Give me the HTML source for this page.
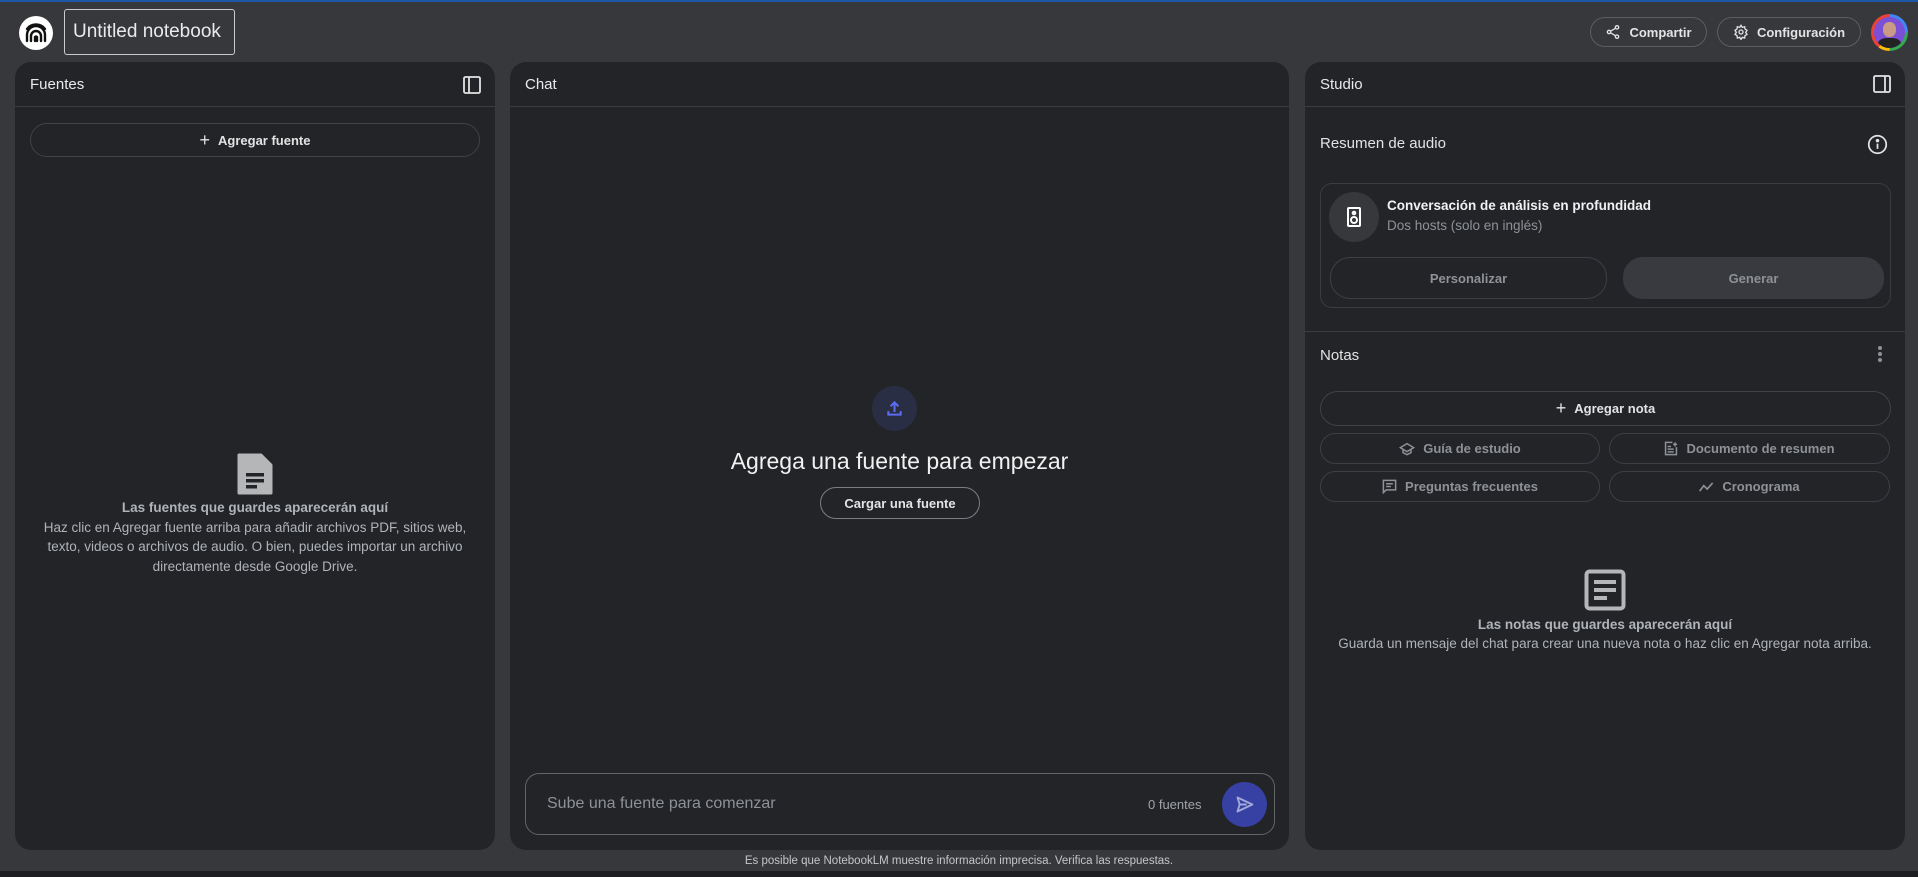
<!DOCTYPE html>
<html><head><meta charset="utf-8"><style>
*{box-sizing:border-box;margin:0;padding:0}
body{width:1918px;height:877px;background:#37383c;font-family:"Liberation Sans",sans-serif;color:#e3e3e3;position:relative;overflow:hidden}
.a{position:absolute}
.panel{position:absolute;background:#222428;border-radius:16px;top:62px;height:788px}
.hdr{position:absolute;left:0;right:0;top:0;height:45px;border-bottom:1px solid #3a3c41}
.title{position:absolute;top:14px;font-size:15px;color:#e8eaed}
.btn{position:absolute;border:1px solid #45484d;border-radius:20px;display:flex;align-items:center;justify-content:center;font-size:13px;font-weight:bold;color:#e3e3e3;gap:8px}
.dim{color:#8e9196;border-color:#3c3f44}
.c{text-align:center}
</style></head><body>
<div class="a" style="left:0;top:0;width:1918px;height:2px;background:#1e56a8"></div>
<div class="a" style="left:19px;top:16px;width:34px;height:34px;border-radius:50%;background:#fff"></div>
<svg class="a" style="left:19px;top:16px" width="34" height="34" viewBox="0 0 34 34"><g fill="none" stroke="#111" stroke-width="2.4" stroke-linecap="round"><path d="M8 25V19a9 9 0 0 1 18 0v6"/><path d="M12 25v-5a5 5 0 0 1 10 0v5"/><path d="M8 13a10 8 0 0 1 18 0"/><path d="M16 25v-4a1.5 1.5 0 0 1 2 0v4"/></g></svg>
<div class="a" style="left:64px;top:9px;width:171px;height:46px;border:1px solid #c9cacc;border-radius:3px;font-size:19px;line-height:44px;padding-left:8px;color:#e8eaed">Untitled notebook</div>
<div class="btn" style="left:1590px;top:17px;width:117px;height:30px;font-size:13px;border-color:#5a5d62">
<svg width="16" height="16" viewBox="0 0 24 24" fill="none" stroke="#e3e3e3" stroke-width="2"><circle cx="18" cy="5" r="2.5"/><circle cx="6" cy="12" r="2.5"/><circle cx="18" cy="19" r="2.5"/><path d="M8.2 10.8l7.6-4.4M8.2 13.2l7.6 4.4"/></svg>Compartir</div>
<div class="btn" style="left:1717px;top:17px;width:144px;height:30px;border-color:#5a5d62">
<svg width="16" height="16" viewBox="0 0 24 24" fill="none" stroke="#e3e3e3" stroke-width="2"><circle cx="12" cy="12" r="3"/><path d="M12 2l2 3 3.5-1 .5 3.5 3 2-2 3 2 3-3 2-.5 3.5-3.5-1-2 3-2-3-3.5 1-.5-3.5-3-2 2-3-2-3 3-2 .5-3.5 3.5 1z"/></svg>Configuración</div>
<div class="a" style="left:1871px;top:14px;width:37px;height:37px;border-radius:50%;background:conic-gradient(#4285f4 0 25%,#34a853 25% 50%,#fbbc05 50% 60%,#ea4335 60% 100%)"></div>
<div class="a" style="left:1874px;top:17px;width:31px;height:31px;border-radius:50%;background:#7b4fd6;overflow:hidden"><div class="a" style="left:9px;top:5px;width:13px;height:15px;border-radius:45%;background:#c99a84"></div><div class="a" style="left:4px;top:21px;width:23px;height:14px;border-radius:40%;background:#222"></div></div>

<div class="panel" style="left:15px;width:480px">
<div class="hdr"><div class="title" style="left:15px">Fuentes</div>
<svg class="a" style="left:448px;top:14px" width="18" height="18" viewBox="0 0 18 18" fill="none" stroke="#e3e3e3" stroke-width="1.8"><rect x="1" y="1" width="16" height="16" rx="1.5"/><path d="M6 1v16"/></svg></div>
<div class="btn" style="left:15px;top:61px;width:450px;height:34px;border-color:#3f4247"><span style="font-size:18px;font-weight:normal">+</span>Agregar fuente</div>
<svg class="a" style="left:221px;top:390px" width="38" height="44" viewBox="0 0 38 44"><path d="M3 3h22l10 10v28H3z" fill="#b5b6b8" stroke="#b5b6b8" stroke-width="3" stroke-linejoin="round"/><rect x="10" y="21" width="18" height="3.5" fill="#222428"/><rect x="10" y="27" width="18" height="3.5" fill="#222428"/><rect x="10" y="33" width="11" height="3.5" fill="#222428"/></svg>
<div class="a c" style="left:0;width:480px;top:436px;font-size:13.5px;line-height:19.5px;color:#b0b3b8"><b>Las fuentes que guardes aparecerán aquí</b><br>Haz clic en Agregar fuente arriba para añadir archivos PDF, sitios web,<br>texto, videos o archivos de audio. O bien, puedes importar un archivo<br>directamente desde Google Drive.</div>
</div>

<div class="panel" style="left:510px;width:779px">
<div class="hdr"><div class="title" style="left:15px">Chat</div></div>
<div class="a" style="left:362px;top:324px;width:45px;height:45px;border-radius:50%;background:#2a2e44"></div>
<svg class="a" style="left:374px;top:336px" width="21" height="21" viewBox="0 0 24 24" fill="none" stroke="#5b6cf0" stroke-width="2.4"><path d="M12 16V5M7.5 9.5L12 5l4.5 4.5M5 15v4h14v-4"/></svg>
<div class="a c" style="left:0;width:779px;top:386px;font-size:23px;color:#f1f1f1">Agrega una fuente para empezar</div>
<div class="btn" style="left:310px;top:425px;width:160px;height:32px;border-color:#7a7d82">Cargar una fuente</div>
<div class="a" style="left:15px;top:711px;width:750px;height:62px;border:1px solid #62656a;border-radius:14px"></div>
<div class="a" style="left:37px;top:733px;font-size:16px;color:#8e9196">Sube una fuente para comenzar</div>
<div class="a" style="left:638px;top:735px;font-size:13px;color:#a0a3a8">0 fuentes</div>
<div class="a" style="left:712px;top:720px;width:45px;height:45px;border-radius:50%;background:#3641a3"></div>
<svg class="a" style="left:724px;top:732px" width="21" height="21" viewBox="0 0 24 24" fill="none" stroke="#a3a9d8" stroke-width="2.2" stroke-linejoin="round"><path d="M4 4l17 8-17 8 2.5-8z M6.5 12h8"/></svg>
</div>

<div class="panel" style="left:1305px;width:600px">
<div class="hdr"><div class="title" style="left:15px">Studio</div>
<svg class="a" style="left:568px;top:13px" width="18" height="18" viewBox="0 0 18 18" fill="none" stroke="#e3e3e3" stroke-width="1.8"><rect x="1" y="1" width="16" height="16" rx="1.5"/><path d="M12 1v16"/></svg></div>
<div class="a" style="left:15px;top:73px;font-size:15px">Resumen de audio</div>
<svg class="a" style="left:562px;top:72px" width="21" height="21" viewBox="0 0 24 24" fill="none" stroke="#e3e3e3" stroke-width="2"><circle cx="12" cy="12" r="10"/><path d="M12 11v6"/><circle cx="12" cy="7.5" r="1" fill="#e3e3e3"/></svg>
<div class="a" style="left:15px;top:121px;width:571px;height:125px;border:1px solid #3a3c41;border-radius:12px"></div>
<div class="a" style="left:24px;top:130px;width:50px;height:50px;border-radius:50%;background:#36383c"></div>
<svg class="a" style="left:41px;top:144px" width="16" height="22" viewBox="0 0 16 22" fill="none" stroke="#fff" stroke-width="2"><rect x="2" y="2" width="12" height="18" rx="1"/><circle cx="8" cy="7" r="1.3"/><circle cx="8" cy="14" r="3"/></svg>
<div class="a" style="left:82px;top:136px;font-size:13.5px;font-weight:bold;color:#f1f1f1">Conversación de análisis en profundidad</div>
<div class="a" style="left:82px;top:156px;font-size:13.5px;color:#8e9196">Dos hosts (solo en inglés)</div>
<div class="btn dim" style="left:25px;top:195px;width:277px;height:42px">Personalizar</div>
<div class="btn" style="left:318px;top:195px;width:261px;height:42px;background:#383a3f;border-color:#383a3f;color:#8e9196">Generar</div>
<div class="a" style="left:0;right:0;top:269px;height:1px;background:#3a3c41"></div>
<div class="a" style="left:15px;top:285px;font-size:15px">Notas</div>
<div class="a" style="left:573px;top:284px;width:4px;height:4px;border-radius:50%;background:#8e9196;box-shadow:0 6px 0 #8e9196,0 12px 0 #8e9196"></div>
<div class="btn" style="left:15px;top:329px;width:571px;height:35px;border-color:#3f4247"><span style="font-size:18px;font-weight:normal">+</span>Agregar nota</div>
<div class="btn dim" style="left:15px;top:371px;width:280px;height:31px">
<svg width="16" height="14" viewBox="0 0 24 20" fill="none" stroke="#8e9196" stroke-width="2.2"><path d="M12 2L2 8l10 6 10-6zM6 10.5v5l6 3 6-3v-5"/></svg>Guía de estudio</div>
<div class="btn dim" style="left:304px;top:371px;width:281px;height:31px">
<svg width="14" height="15" viewBox="0 0 20 22" fill="none" stroke="#8e9196" stroke-width="2.2"><path d="M12 2H2v18h16V9M5 8h5M5 12h9M5 16h9M16 2v6M13 5h6"/></svg>Documento de resumen</div>
<div class="btn dim" style="left:15px;top:409px;width:280px;height:31px">
<svg width="15" height="15" viewBox="0 0 22 22" fill="none" stroke="#8e9196" stroke-width="2.2"><path d="M2 2h18v14H6l-4 4zM6 7h10M6 11h7"/></svg>Preguntas frecuentes</div>
<div class="btn dim" style="left:304px;top:409px;width:281px;height:31px">
<svg width="15" height="12" viewBox="0 0 22 16" fill="none" stroke="#8e9196" stroke-width="2.4"><path d="M1 14l6-8 5 5 8-9"/></svg>Cronograma</div>
<svg class="a" style="left:279px;top:507px" width="42" height="42" viewBox="0 0 42 42"><rect x="2.5" y="2.5" width="37" height="37" rx="3" fill="none" stroke="#b5b6b8" stroke-width="4"/><rect x="10" y="11" width="22" height="4" fill="#b5b6b8"/><rect x="10" y="19" width="22" height="4" fill="#b5b6b8"/><rect x="10" y="27" width="13" height="4" fill="#b5b6b8"/></svg>
<div class="a c" style="left:0;width:600px;top:553px;font-size:13.5px;line-height:19px;color:#b0b3b8"><b>Las notas que guardes aparecerán aquí</b><br>Guarda un mensaje del chat para crear una nueva nota o haz clic en Agregar nota arriba.</div>
</div>

<div class="a c" style="left:0;width:1918px;top:855px;font-size:11.5px;color:#c4c6ca">Es posible que NotebookLM muestre información imprecisa. Verifica las respuestas.</div>
<div class="a" style="left:0;top:871px;width:1918px;height:6px;background:#1d1e21"></div>
</body></html>
